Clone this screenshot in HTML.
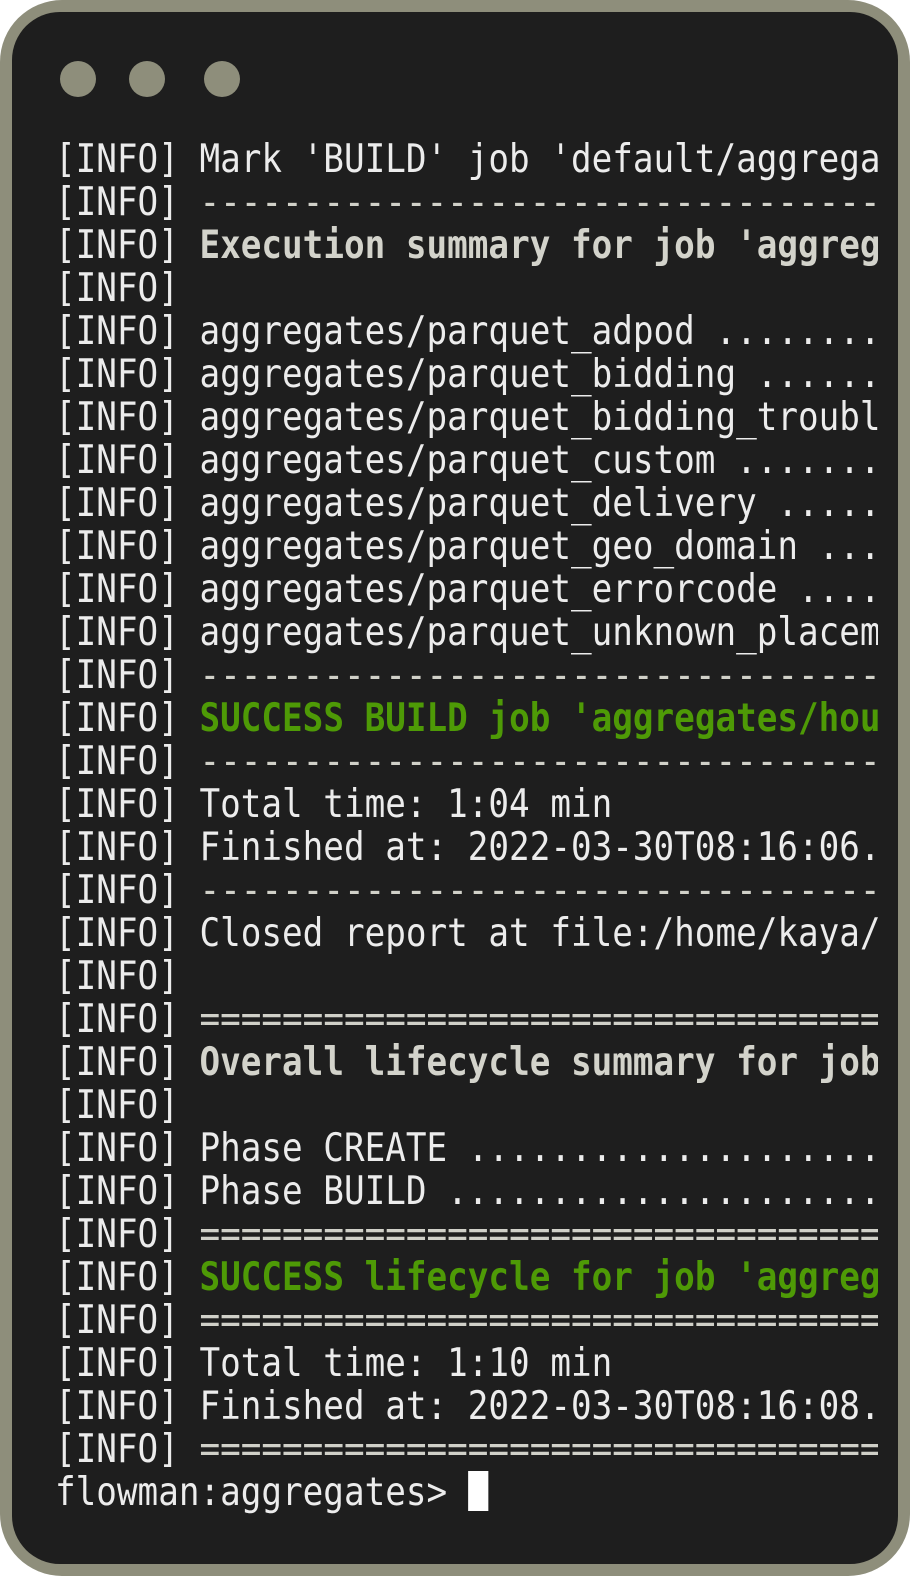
<!DOCTYPE html>
<html><head><meta charset="utf-8"><style>
html,body{margin:0;padding:0;background:#fff;}
body{width:910px;height:1576px;position:relative;overflow:hidden;}
.frame{position:absolute;left:0;top:0;width:910px;height:1576px;background:#8e8e7b;border-radius:62px;}
.inner{position:absolute;left:12px;top:12px;width:886px;height:1552px;background:#1e1e1e;border-radius:48px;overflow:hidden;}
.dot{position:absolute;width:36px;height:36px;border-radius:50%;background:#8e8e7b;top:49px;}
.clip{position:absolute;left:43px;top:126px;width:823px;height:1400px;overflow:hidden;}
.txt{position:absolute;left:0;top:0;width:1200px;transform:scaleX(0.879);transform-origin:0 0;
 font-family:"DejaVu Sans Mono","Liberation Mono",monospace;font-size:39px;line-height:43px;color:#ececec;white-space:pre;}
.b{font-weight:bold;color:#d3d3cb;}
.g{font-weight:bold;color:#4e9a06;}
.s{color:#d0d0c8;}
.cur{display:inline-block;width:23px;height:40px;background:#fff;vertical-align:-6px;}
</style></head><body>
<div class="frame"></div>
<div class="inner">
<div class="dot" style="left:48px"></div>
<div class="dot" style="left:117px"></div>
<div class="dot" style="left:192px"></div>
<div class="clip"><div class="txt">[INFO] Mark 'BUILD' job 'default/aggregates/hourly'
[INFO] <span class="s">-----------------------------------------------</span>
[INFO] <span class="b">Execution summary for job 'aggregates/hourly'</span>
[INFO]
[INFO] aggregates/parquet_adpod ..................
[INFO] aggregates/parquet_bidding ................
[INFO] aggregates/parquet_bidding_troubleshooting
[INFO] aggregates/parquet_custom .................
[INFO] aggregates/parquet_delivery ...............
[INFO] aggregates/parquet_geo_domain .............
[INFO] aggregates/parquet_errorcode ..............
[INFO] aggregates/parquet_unknown_placement ......
[INFO] <span class="s">-----------------------------------------------</span>
[INFO] <span class="g">SUCCESS BUILD job 'aggregates/hourly'</span>
[INFO] <span class="s">-----------------------------------------------</span>
[INFO] Total time: 1:04 min
[INFO] Finished at: 2022-03-30T08:16:06.123
[INFO] <span class="s">-----------------------------------------------</span>
[INFO] Closed report at file:/home/kaya/report
[INFO]
[INFO] <span class="s">===============================================</span>
[INFO] <span class="b">Overall lifecycle summary for job 'aggregates'</span>
[INFO]
[INFO] Phase CREATE ..............................
[INFO] Phase BUILD ...............................
[INFO] <span class="s">===============================================</span>
[INFO] <span class="g">SUCCESS lifecycle for job 'aggregates/hourly'</span>
[INFO] <span class="s">===============================================</span>
[INFO] Total time: 1:10 min
[INFO] Finished at: 2022-03-30T08:16:08.456
[INFO] <span class="s">===============================================</span>
flowman:aggregates&gt; <span class="cur"></span></div></div>
</div>
</body></html>
